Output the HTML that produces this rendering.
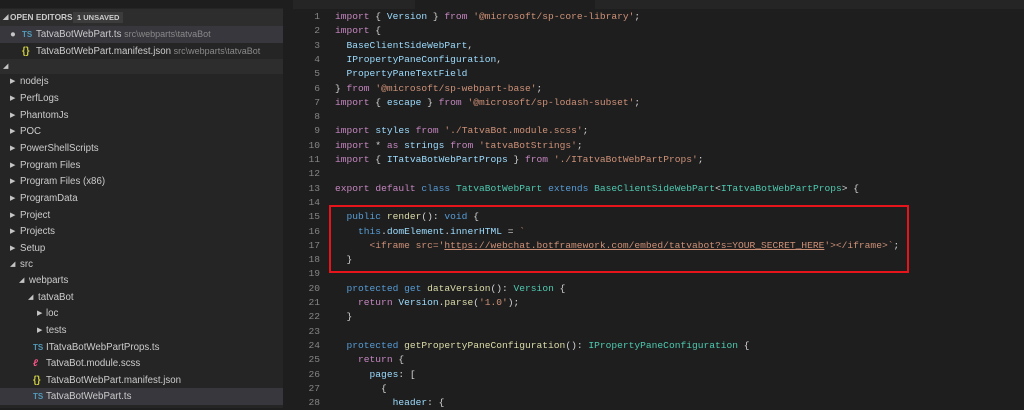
<!DOCTYPE html>
<html><head><meta charset="utf-8"><style>
*{margin:0;padding:0;box-sizing:border-box}
body{width:1024px;height:408px;overflow:hidden;background:#1e1e1e;position:relative;font-family:"Liberation Sans",sans-serif}
#side{position:absolute;left:0;top:0;width:283px;height:408px;background:#252526}
.r{position:absolute;left:0;width:283px;height:17px;line-height:17px;font-size:9.7px;color:#cccccc;white-space:nowrap}
.hl{background:#37373d}
.ar{position:absolute;font-size:7px;color:#c5c5c5}
.ts{color:#519aba;font-size:8px;font-weight:bold}
.js{color:#cbcb41;font-weight:bold}
.pth{color:#8a8a8a;font-size:9px}
#code{position:absolute;left:0;top:0}
.l{position:absolute;left:296px;height:14.3px;line-height:14.3px;font-family:"Liberation Mono",monospace;font-size:9.6px;white-space:pre;color:#d4d4d4}
.n{display:inline-block;width:24px;text-align:right;color:#858585;margin-right:15px}
.k{color:#c586c0}.b{color:#569cd6}.v{color:#9cdcfe}.s{color:#ce9178}.t{color:#4ec9b0}.f{color:#dcdcaa}.u{color:#ce9178;text-decoration:underline}
</style></head><body>
<div id="side">
<div style="position:absolute;left:0;top:0;width:283px;height:8px;background:#1e1e1e"></div>
<div class="r" style="top:9px;height:17px;background:#2d2d2d;font-size:8.3px;font-weight:bold;color:#cccccc"><span class="ar" style="left:3px">◢</span><span style="position:absolute;left:10px">OPEN EDITORS</span><span style="position:absolute;left:73px;top:3px;height:11px;line-height:11px;padding:0 4px;background:#3c3c3c;font-size:7.5px">1 UNSAVED</span></div>
<div class="r hl" style="top:26px"><span style="position:absolute;left:10px;color:#c5c5c5">●</span><span class="ts" style="position:absolute;left:22px">TS</span><span style="position:absolute;left:36px">TatvaBotWebPart.ts <span class="pth">src\webparts\tatvaBot</span></span></div>
<div class="r" style="top:43px"><span class="js" style="position:absolute;left:22px">{}</span><span style="position:absolute;left:36px">TatvaBotWebPart.manifest.json <span class="pth">src\webparts\tatvaBot</span></span></div>
<div class="r" style="top:59px;height:15px;background:#2d2d2d"><span class="ar" style="left:3px;top:-1px">◢</span></div>
<div class="r" style="top:73px"><span class="ar" style="left:10px">▶</span><span style="position:absolute;left:20px">nodejs</span></div>
<div class="r" style="top:90px"><span class="ar" style="left:10px">▶</span><span style="position:absolute;left:20px">PerfLogs</span></div>
<div class="r" style="top:107px"><span class="ar" style="left:10px">▶</span><span style="position:absolute;left:20px">PhantomJs</span></div>
<div class="r" style="top:123px"><span class="ar" style="left:10px">▶</span><span style="position:absolute;left:20px">POC</span></div>
<div class="r" style="top:140px"><span class="ar" style="left:10px">▶</span><span style="position:absolute;left:20px">PowerShellScripts</span></div>
<div class="r" style="top:157px"><span class="ar" style="left:10px">▶</span><span style="position:absolute;left:20px">Program Files</span></div>
<div class="r" style="top:173px"><span class="ar" style="left:10px">▶</span><span style="position:absolute;left:20px">Program Files (x86)</span></div>
<div class="r" style="top:190px"><span class="ar" style="left:10px">▶</span><span style="position:absolute;left:20px">ProgramData</span></div>
<div class="r" style="top:207px"><span class="ar" style="left:10px">▶</span><span style="position:absolute;left:20px">Project</span></div>
<div class="r" style="top:223px"><span class="ar" style="left:10px">▶</span><span style="position:absolute;left:20px">Projects</span></div>
<div class="r" style="top:240px"><span class="ar" style="left:10px">▶</span><span style="position:absolute;left:20px">Setup</span></div>
<div class="r" style="top:256px"><span class="ar" style="left:10px">◢</span><span style="position:absolute;left:20px">src</span></div>
<div class="r" style="top:272px"><span class="ar" style="left:19px">◢</span><span style="position:absolute;left:29px">webparts</span></div>
<div class="r" style="top:289px"><span class="ar" style="left:28px">◢</span><span style="position:absolute;left:38px">tatvaBot</span></div>
<div class="r" style="top:305px"><span class="ar" style="left:37px">▶</span><span style="position:absolute;left:46px">loc</span></div>
<div class="r" style="top:322px"><span class="ar" style="left:37px">▶</span><span style="position:absolute;left:46px">tests</span></div>
<div class="r" style="top:339px"><span class="ts" style="position:absolute;left:33px">TS</span><span style="position:absolute;left:46px">ITatvaBotWebPartProps.ts</span></div>
<div class="r" style="top:355px"><span style="position:absolute;left:33px;color:#f55385;font-style:italic;font-weight:bold">ℓ</span><span style="position:absolute;left:46px">TatvaBot.module.scss</span></div>
<div class="r" style="top:372px"><span class="js" style="position:absolute;left:33px">{}</span><span style="position:absolute;left:46px">TatvaBotWebPart.manifest.json</span></div>
<div class="r hl" style="top:388px"><span class="ts" style="position:absolute;left:33px">TS</span><span style="position:absolute;left:46px">TatvaBotWebPart.ts</span></div>
</div>
<div style="position:absolute;left:293px;top:0;width:731px;height:9px;background:#252526"></div>
<div style="position:absolute;left:415px;top:0;width:180px;height:9px;background:#1e1e1e"></div>
<div id="code">
<div class="l" style="top:10px"><span class="n">1</span><span class="k">import</span> { <span class="v">Version</span> } <span class="k">from</span> <span class="s">'@microsoft/sp-core-library'</span>;</div>
<div class="l" style="top:24.3px"><span class="n">2</span><span class="k">import</span> {</div>
<div class="l" style="top:38.6px"><span class="n">3</span>  <span class="v">BaseClientSideWebPart</span>,</div>
<div class="l" style="top:52.9px"><span class="n">4</span>  <span class="v">IPropertyPaneConfiguration</span>,</div>
<div class="l" style="top:67.2px"><span class="n">5</span>  <span class="v">PropertyPaneTextField</span></div>
<div class="l" style="top:81.5px"><span class="n">6</span>} <span class="k">from</span> <span class="s">'@microsoft/sp-webpart-base'</span>;</div>
<div class="l" style="top:95.8px"><span class="n">7</span><span class="k">import</span> { <span class="v">escape</span> } <span class="k">from</span> <span class="s">'@microsoft/sp-lodash-subset'</span>;</div>
<div class="l" style="top:110.1px"><span class="n">8</span></div>
<div class="l" style="top:124.4px"><span class="n">9</span><span class="k">import</span> <span class="v">styles</span> <span class="k">from</span> <span class="s">'./TatvaBot.module.scss'</span>;</div>
<div class="l" style="top:138.7px"><span class="n">10</span><span class="k">import</span> * <span class="k">as</span> <span class="v">strings</span> <span class="k">from</span> <span class="s">'tatvaBotStrings'</span>;</div>
<div class="l" style="top:153px"><span class="n">11</span><span class="k">import</span> { <span class="v">ITatvaBotWebPartProps</span> } <span class="k">from</span> <span class="s">'./ITatvaBotWebPartProps'</span>;</div>
<div class="l" style="top:167.3px"><span class="n">12</span></div>
<div class="l" style="top:181.6px"><span class="n">13</span><span class="k">export</span> <span class="k">default</span> <span class="b">class</span> <span class="t">TatvaBotWebPart</span> <span class="b">extends</span> <span class="t">BaseClientSideWebPart</span>&lt;<span class="t">ITatvaBotWebPartProps</span>&gt; {</div>
<div class="l" style="top:195.9px"><span class="n">14</span></div>
<div class="l" style="top:210.2px"><span class="n">15</span>  <span class="b">public</span> <span class="f">render</span>(): <span class="b">void</span> {</div>
<div class="l" style="top:224.5px"><span class="n">16</span>    <span class="b">this</span>.<span class="v">domElement</span>.<span class="v">innerHTML</span> = <span class="s">`</span></div>
<div class="l" style="top:238.8px"><span class="n">17</span><span class="s">      &lt;iframe src='<span class="u">https://webchat.botframework.com/embed/tatvabot?s=YOUR_SECRET_HERE</span>'&gt;&lt;/iframe&gt;`</span>;</div>
<div class="l" style="top:253.1px"><span class="n">18</span>  }</div>
<div class="l" style="top:267.4px"><span class="n">19</span></div>
<div class="l" style="top:281.7px"><span class="n">20</span>  <span class="b">protected</span> <span class="b">get</span> <span class="f">dataVersion</span>(): <span class="t">Version</span> {</div>
<div class="l" style="top:296px"><span class="n">21</span>    <span class="k">return</span> <span class="v">Version</span>.<span class="f">parse</span>(<span class="s">'1.0'</span>);</div>
<div class="l" style="top:310.3px"><span class="n">22</span>  }</div>
<div class="l" style="top:324.6px"><span class="n">23</span></div>
<div class="l" style="top:338.9px"><span class="n">24</span>  <span class="b">protected</span> <span class="f">getPropertyPaneConfiguration</span>(): <span class="t">IPropertyPaneConfiguration</span> {</div>
<div class="l" style="top:353.2px"><span class="n">25</span>    <span class="k">return</span> {</div>
<div class="l" style="top:367.5px"><span class="n">26</span>      <span class="v">pages</span>: [</div>
<div class="l" style="top:381.8px"><span class="n">27</span>        {</div>
<div class="l" style="top:396.1px"><span class="n">28</span>          <span class="v">header</span>: {</div>
</div>
<div style="position:absolute;left:329px;top:205px;width:580px;height:68px;border:2px solid #e8141c"></div>
</body></html>
